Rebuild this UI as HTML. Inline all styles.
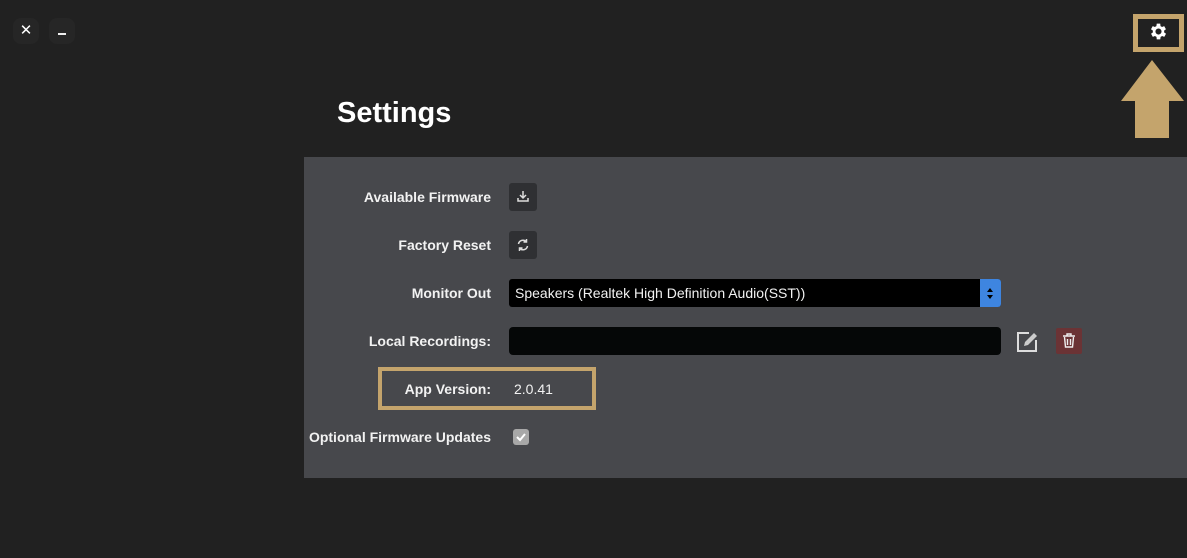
<!DOCTYPE html>
<html><head><style>
body{margin:0;width:1187px;height:558px;background:#212121;font-family:"Liberation Sans",sans-serif;position:relative;overflow:hidden;color:#fff}
.a{position:absolute}
.lbl{position:absolute;right:696px;font-weight:bold;font-size:14px;color:#f2f2f2;transform:translateY(-50%);white-space:nowrap}
.btn{position:absolute;width:28px;height:28px;background:#2f3033;border-radius:3px}
</style></head><body>
<div class="a" style="left:13px;top:18px;width:26px;height:26px;border-radius:8px;background:#262626;text-align:center;line-height:26px;font-size:15px">✕</div>
<div class="a" style="left:49px;top:18px;width:26px;height:26px;border-radius:8px;background:#262626"><div class="a" style="left:9px;top:15px;width:8px;height:2px;background:#eee"></div></div>
<div class="a" style="left:1133px;top:14px;width:41px;height:28px;border:5px solid #c4a46c"></div>
<svg class="a" style="left:1148px;top:21px" width="21" height="21" viewBox="0 0 24 24"><path fill="#fff" d="M19.4 13a7.5 7.5 0 000-2l2.1-1.6-2-3.5-2.5 1a7.6 7.6 0 00-1.7-1L15 3h-4l-.4 2.9a7.6 7.6 0 00-1.7 1l-2.5-1-2 3.5L6.6 11a7.5 7.5 0 000 2l-2.1 1.6 2 3.5 2.5-1a7.6 7.6 0 001.7 1L11 21h4l.4-2.9a7.6 7.6 0 001.7-1l2.5 1 2-3.5zM13 15.5a3.5 3.5 0 110-7 3.5 3.5 0 010 7z" transform="translate(-1 0)"/></svg>
<svg class="a" style="left:1120px;top:60px" width="65" height="80"><path fill="#c4a46c" d="M32 0L64 41H49V78H15V41H1Z"/></svg>
<div class="a" style="left:337px;top:97px;font-size:29px;font-weight:bold">Settings</div>
<div class="a" style="left:304px;top:157px;width:883px;height:321px;background:#47484c"></div>
<div class="lbl" style="top:197px">Available Firmware</div>
<div class="btn" style="left:509px;top:183px"><svg width="28" height="28"><path d="M14 8v7M11 12l3 3 3-3M9 15v3h10v-3" stroke="#ddd" stroke-width="1.5" fill="none"/></svg></div>
<div class="lbl" style="top:245px">Factory Reset</div>
<div class="btn" style="left:509px;top:231px"><svg width="28" height="28"><path d="M9.5 13a4.5 4.5 0 018-2M18.5 15a4.5 4.5 0 01-8 2M17.5 8v3h-3M10.5 20v-3h3" stroke="#ddd" stroke-width="1.5" fill="none"/></svg></div>
<div class="lbl" style="top:293px">Monitor Out</div>
<div class="a" style="left:509px;top:279px;width:492px;height:28px;background:#000;border-radius:3px"></div>
<div class="a" style="left:515px;top:285px;font-size:14px;color:#f2f2f2">Speakers (Realtek High Definition Audio(SST))</div>
<div class="a" style="left:980px;top:279px;width:21px;height:28px;background:#3e85e0;border-radius:0 3px 3px 0"><svg width="21" height="28"><path d="M7 13l3-4 3 4zM7 16l3 4 3-4z" fill="#000"/></svg></div>
<div class="lbl" style="top:341px">Local Recordings:</div>
<div class="a" style="left:509px;top:327px;width:492px;height:28px;background:#050707;border-radius:4px"></div>
<svg class="a" style="left:1016px;top:329px" width="24" height="24"><path d="M13 4H2v18h18V11" stroke="#ddd" stroke-width="2" fill="none"/><path d="M8 17l1-4 9-9 3 3-9 9z" fill="#ccc"/></svg>
<div class="a" style="left:1056px;top:328px;width:26px;height:26px;background:#6b3335;border-radius:2px"><svg width="26" height="26"><path d="M7 8h12M11 8V6h4v2M8.5 9l1 10h7l1-10M11.5 11v6M14.5 11v6" stroke="#eee" stroke-width="1.4" fill="none"/></svg></div>
<div class="a" style="left:378px;top:367px;width:210px;height:35px;border:4px solid #c4a46c"></div>
<div class="lbl" style="top:389px">App Version:</div>
<div class="a" style="left:514px;top:381px;font-size:14px;color:#f2f2f2">2.0.41</div>
<div class="lbl" style="top:437px">Optional Firmware Updates</div>
<div class="a" style="left:513px;top:429px;width:16px;height:16px;background:#a8a8a8;border-radius:3px"><svg width="16" height="16"><path d="M4 8l3 3 5-6" stroke="#fff" stroke-width="2" fill="none"/></svg></div>
</body></html>
